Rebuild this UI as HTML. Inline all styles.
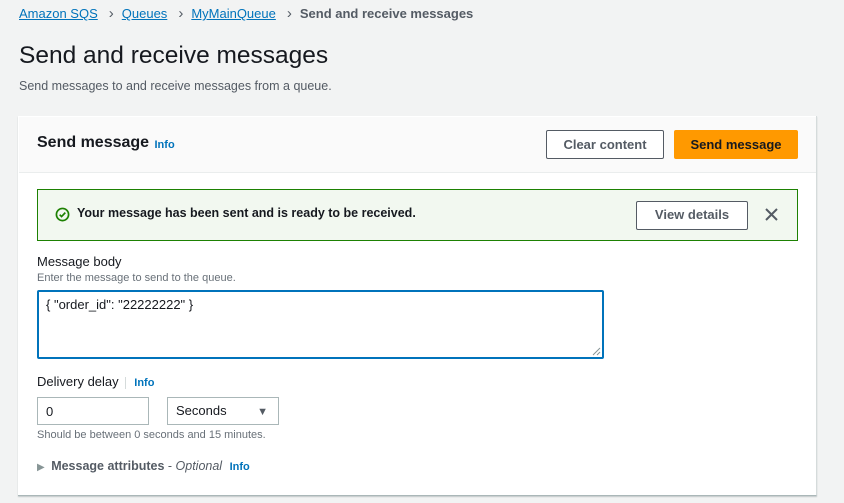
<!DOCTYPE html>
<html><head><meta charset="utf-8"><style>
*{box-sizing:border-box;margin:0;padding:0}
body{width:844px;height:503px;background:#f2f3f3;font-family:"Liberation Sans",Arial,sans-serif;color:#16191f;position:relative;overflow:hidden}
.a{position:absolute;white-space:nowrap}
.lnk{color:#0073bb;text-decoration:underline}
.info{color:#0073bb;font-weight:bold;font-size:11px}
.btn{position:absolute;border:1px solid #545b64;background:#fff;color:#545b64;font-weight:bold;font-size:13px;text-align:center;border-radius:2px}
.sep{margin:0 8px 0 11px;font-size:15px}
</style></head><body>
<div class="a" style="left:19px;top:5px;font-size:13px;color:#545b64"><span class="lnk">Amazon SQS</span><span class="sep">&#x203A;</span><span class="lnk">Queues</span><span class="sep">&#x203A;</span><span class="lnk">MyMainQueue</span><span class="sep">&#x203A;</span><b>Send and receive messages</b></div>
<div class="a" style="left:19px;top:42px;font-size:24.5px">Send and receive messages</div>
<div class="a" style="left:19px;top:79px;font-size:12.5px;color:#545b64">Send messages to and receive messages from a queue.</div>
<div class="a" style="left:18px;top:116px;width:799px;height:380px;background:#fff;border-right:1px solid #d5dbdb;border-bottom:1px solid #aab7b8;box-shadow:0 1px 1px rgba(0,28,36,.2)"></div>
<div class="a" style="left:19px;top:117px;width:797px;height:56px;background:#fafafa;border-bottom:1px solid #eaeded"></div>
<div class="a" style="left:37px;top:134px;font-size:16px;font-weight:bold">Send message <span class="info" style="margin-left:1px;position:relative;top:1px">Info</span></div>
<div class="btn" style="left:546px;top:130px;width:118px;height:29px;line-height:27px">Clear content</div>
<div class="btn" style="left:674px;top:130px;width:124px;height:29px;line-height:27px;background:#ff9900;border-color:#ff9900;color:#16191f">Send message</div>
<div class="a" style="left:37px;top:189px;width:761px;height:52px;background:#f2f8f0;border:1px solid #1d8102"></div>
<svg class="a" style="left:55px;top:207px" width="15" height="15" viewBox="0 0 16 16"><circle cx="8" cy="8" r="6.5" fill="none" stroke="#1d8102" stroke-width="1.8"/><path d="M5 8.2l2 2 4-4.2" fill="none" stroke="#1d8102" stroke-width="1.8"/></svg>
<div class="a" style="left:77px;top:206px;font-size:12.5px;font-weight:bold">Your message has been sent and is ready to be received.</div>
<div class="btn" style="left:636px;top:201px;width:112px;height:29px;line-height:26px">View details</div>
<svg class="a" style="left:765px;top:208px" width="13" height="13" viewBox="0 0 13 13"><path d="M1 1l11 11M12 1L1 12" stroke="#545b64" stroke-width="2"/></svg>
<div class="a" style="left:37px;top:254px;font-size:13px">Message body</div>
<div class="a" style="left:37px;top:272px;font-size:11px;color:#687078">Enter the message to send to the queue.</div>
<div class="a" style="left:37px;top:290px;width:567px;height:69px;border:2px solid #0073bb;border-radius:2px;background:#fff"></div>
<div class="a" style="left:46px;top:297px;font-size:13px">{ "order_id": "22222222" }</div>
<svg class="a" style="left:592px;top:347px" width="9" height="9"><path d="M1 8L8 1M5 8L8 5" stroke="#879596"/></svg>
<div class="a" style="left:37px;top:374px;font-size:13px">Delivery delay <span style="border-left:1px solid #d5dbdb;margin-left:3px;padding-left:8px" class="info">Info</span></div>
<div class="a" style="left:37px;top:397px;width:112px;height:28px;border:1px solid #aab7b8;background:#fff;font-size:13px;padding:6px 8px">0</div>
<div class="a" style="left:167px;top:397px;width:112px;height:28px;border:1px solid #aab7b8;background:#fff;font-size:13px;padding:5px 8px">Seconds<span style="position:absolute;right:10px;top:8px;font-size:11px;color:#545b64">&#9660;</span></div>
<div class="a" style="left:37px;top:429px;font-size:11px;color:#687078">Should be between 0 seconds and 15 minutes.</div>
<div class="a" style="left:37px;top:459px;font-size:12.5px;color:#545b64"><span style="font-size:10px;color:#879596">&#9654;</span> <b style="margin-left:3px">Message attributes</b> - <i>Optional</i> <span class="info" style="margin-left:4px">Info</span></div>
</body></html>
